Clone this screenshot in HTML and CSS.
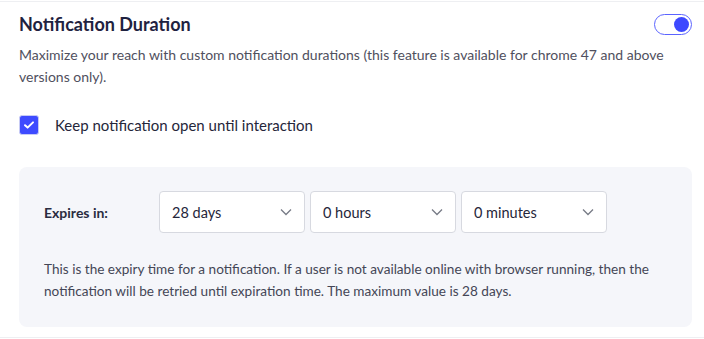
FILE: index.html
```html
<!DOCTYPE html>
<html>
<head>
<meta charset="utf-8">
<link rel="stylesheet" href="styles.css">
</head>
<body>
<div class="panel">
  <div class="header">
    <h2 class="title">Notification Duration</h2>
    <span class="toggle"><span class="knob"></span></span>
  </div>
  <p class="desc">Maximize your reach with custom notification durations (this feature is available for chrome 47 and above versions only).</p>
  <label class="check-row">
    <span class="checkbox">
      <svg width="12" height="10" viewBox="0 0 12 10"><path d="M2 5.2 L4.6 7.6 L10 2.4" fill="none" stroke="#fff" stroke-width="2" stroke-linecap="round" stroke-linejoin="round"/></svg>
    </span>
    <span class="check-label">Keep notification open until interaction</span>
  </label>
  <div class="box">
    <div class="expires">
      <span class="exp-label">Expires in:</span>
      <div class="selects">
        <div class="select"><span>28 days</span><svg class="chev" width="12" height="8" viewBox="0 0 12 8"><path d="M1 1.5 L6 6.5 L11 1.5" fill="none" stroke="#777b86" stroke-width="1.3"/></svg></div>
        <div class="select"><span>0 hours</span><svg class="chev" width="12" height="8" viewBox="0 0 12 8"><path d="M1 1.5 L6 6.5 L11 1.5" fill="none" stroke="#777b86" stroke-width="1.3"/></svg></div>
        <div class="select"><span>0 minutes</span><svg class="chev" width="12" height="8" viewBox="0 0 12 8"><path d="M1 1.5 L6 6.5 L11 1.5" fill="none" stroke="#777b86" stroke-width="1.3"/></svg></div>
      </div>
    </div>
    <p class="help">This is the expiry time for a notification. If a user is not available online with browser running, then the notification will be retried until expiration time. The maximum value is 28 days.</p>
  </div>
</div>
</body>
</html>
```
FILE: styles.css
```css
* { box-sizing: border-box; }
html, body { margin: 0; padding: 0; background: #fff; }
body {
  font-family: Lato, "Liberation Sans", sans-serif;
  width: 704px;
  height: 339px;
  overflow: hidden;
}
.panel {
  border-top: 1px solid #eeeff2;
  border-bottom: 1px solid #eeeff2;
  margin-top: 1px;
  padding: 10px 12px 10px 19px;
  height: 337px;
}
.header {
  display: flex;
  justify-content: space-between;
  align-items: center;
  height: 24px;
}
.title {
  margin: 0;
  font-size: 18px;
  font-weight: 700;
  color: #1f2240;
}
.toggle {
  width: 38px;
  height: 21px;
  border: 1.5px solid #5b64ff;
  border-radius: 11px;
  display: flex;
  justify-content: flex-end;
  align-items: center;
  padding-right: 2px;
}
.knob {
  width: 15px;
  height: 15px;
  border-radius: 50%;
  background: #3d49ff;
}
.desc {
  margin: 8px 0 0;
  font-size: 14px;
  line-height: 22px;
  color: #50505e;
  padding-right: 20px;
}
.check-row {
  display: flex;
  align-items: center;
  margin-top: 27px;
  height: 20px;
}
.checkbox {
  width: 20px;
  height: 20px;
  border-radius: 3px;
  background: #3e4bff;
  border: 1px solid #c7cbf5;
  display: flex;
  align-items: center;
  justify-content: center;
}
.check-label {
  margin-left: 16px;
  font-size: 15px;
  color: #25263a;
}
.box {
  margin-top: 32px;
  background: #f5f6fa;
  border-radius: 8px;
  padding: 24px 25px 20px;
  height: 160px;
}
.expires {
  display: flex;
  align-items: center;
}
.exp-label {
  width: 115px;
  font-size: 14px;
  font-weight: 700;
  color: #2a2c40;
}
.selects {
  display: flex;
  gap: 5px;
}
.select {
  width: 146px;
  height: 42px;
  background: #fff;
  border: 1px solid #d7d9e0;
  border-radius: 4px;
  display: flex;
  align-items: center;
  justify-content: space-between;
  padding: 0 12px;
  font-size: 14.5px;
  color: #25263a;
}
.chev { display: block; }
.help {
  margin: 25px 0 0;
  font-size: 13.6px;
  line-height: 22px;
  color: #444656;
}
```
